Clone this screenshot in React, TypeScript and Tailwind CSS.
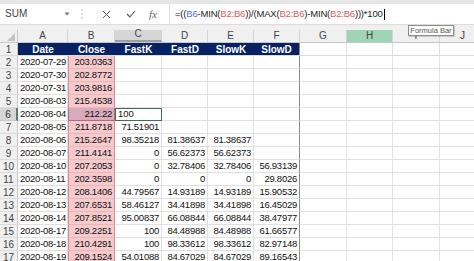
import React from "react";

const colW = ["w-[50px]", "w-[47px]", "w-[47px]", "w-[46px]", "w-[46px]", "w-[46px]", "w-[47px]", "w-[46px]", "w-[47px]", "w-[46px]"];
const letters = ["A", "B", "C", "D", "E", "F", "G", "H", "I", "J"];

type R = [string, string, string?, string?, string?, string?];
const data: R[] = [
  ["2020-07-29", "203.0363"],
  ["2020-07-30", "202.8772"],
  ["2020-07-31", "203.9816"],
  ["2020-08-03", "215.4538"],
  ["2020-08-04", "212.22", "100"],
  ["2020-08-05", "211.8718", "71.51901"],
  ["2020-08-06", "215.2647", "98.35218", "81.38637", "81.38637"],
  ["2020-08-07", "211.4141", "0", "56.62373", "56.62373"],
  ["2020-08-10", "207.2053", "0", "32.78406", "32.78406", "56.93139"],
  ["2020-08-11", "202.3598", "0", "0", "0", "29.8026"],
  ["2020-08-12", "208.1406", "44.79567", "14.93189", "14.93189", "15.90532"],
  ["2020-08-13", "207.6531", "58.46127", "34.41898", "34.41898", "16.45029"],
  ["2020-08-14", "207.8521", "95.00837", "66.08844", "66.08844", "38.47977"],
  ["2020-08-17", "209.2251", "100", "84.48988", "84.48988", "61.66577"],
  ["2020-08-18", "210.4291", "100", "98.33612", "98.33612", "82.97148"],
  ["2020-08-19", "209.1524", "54.01088", "84.67029", "84.67029", "89.16543"],
];

const font = { fontFamily: '"Liberation Sans", Arial, sans-serif' };

function Blue({ children }: { children: React.ReactNode }) {
  return <span className="text-[#4a6fd0]">{children}</span>;
}
function Red({ children }: { children: React.ReactNode }) {
  return <span className="text-[#e0585e]">{children}</span>;
}

const cellText = "text-[9.5px] tracking-[-0.25px] text-[#111] whitespace-nowrap";

export default function App() {
  return (
    <div className="relative w-[474px] h-[261px] overflow-hidden bg-white" style={font}>
      {/* Formula bar area */}
      <div className="h-[4px] bg-[#e6e6e6]" />
      <div className="h-[20px] flex items-center bg-white">
        <div className="w-[76px] h-full flex items-center justify-between pl-[5px] pr-[6px]">
          <span className="text-[10px] text-[#444] leading-none">SUM</span>
          <svg width="6" height="4" viewBox="0 0 6 4"><path d="M0.5 0.5 L3 3.5 L5.5 0.5 Z" fill="#777" /></svg>
        </div>
        <div className="w-[12px] h-full flex items-center justify-center">
          <svg width="2" height="10" viewBox="0 0 2 10">
            <circle cx="1" cy="1" r="0.8" fill="#b5b5b5" />
            <circle cx="1" cy="5" r="0.8" fill="#b5b5b5" />
            <circle cx="1" cy="9" r="0.8" fill="#b5b5b5" />
          </svg>
        </div>
        <div className="w-[82px] h-full flex items-center border-r border-[#e2e2e2]">
          <div className="w-[14px]" />
          <svg width="9" height="9" viewBox="0 0 9 9"><path d="M1 1 L8 8 M8 1 L1 8" stroke="#555" strokeWidth="1" /></svg>
          <div className="w-[15px]" />
          <svg width="10" height="8" viewBox="0 0 10 8"><path d="M1 4 L3.8 7 L9 1" stroke="#555" strokeWidth="1.1" fill="none" /></svg>
          <div className="w-[13px]" />
          <span className="text-[11px] text-[#666] italic leading-none" style={{ fontFamily: '"Liberation Serif", serif' }}>fx</span>
        </div>
        <div className="flex-1 h-full flex items-center pl-[5px] text-[9.5px] tracking-[-0.2px] text-[#222] whitespace-nowrap">
          <span>=((</span><Blue>B6</Blue><span>-MIN(</span><Red>B2:B6</Red><span>))/(MAX(</span><Red>B2:B6</Red><span>)-MIN(</span><Red>B2:B6</Red><span>)))*100</span>
          <span className="inline-block w-px h-[11px] bg-black ml-px" />
        </div>
      </div>
      <div className="h-[6px] bg-[#f0f0f0] border-t border-[#dcdcdc]" />

      {/* Column header row */}
      <div className="flex h-[13px] bg-[#f0f0f0] border-b border-[#c8c8c8]">
        <div className="w-[18px] shrink-0 border-r border-[#c8c8c8] relative">
          <svg className="absolute right-[2px] bottom-[1px]" width="8" height="8" viewBox="0 0 8 8"><path d="M8 0 L8 8 L0 8 Z" fill="#c4c4c4" /></svg>
        </div>
        {letters.map((l, i) => (
          <div
            key={l}
            className={`${colW[i]} shrink-0 flex items-end justify-center pb-px leading-none text-[10px] text-[#444] border-r border-[#d4d4d4] ${
              i === 2 ? "bg-[#d6d6d6] border-b-2 border-b-[#9e9e9e]" : i === 7 ? "bg-[#9fd4b5] text-[#1e5c3a]" : ""
            }`}
          >
            {l}
          </div>
        ))}
      </div>

      {/* Row 1 */}
      <div className="flex h-[13px] border-b border-[#dadada]">
        <div className="w-[18px] shrink-0 bg-[#f0f0f0] border-r border-[#c8c8c8] flex items-center justify-center text-[10px] text-[#444]">1</div>
        {["Date", "Close", "FastK", "FastD", "SlowK", "SlowD"].map((h, i) => (
          <div key={h} className={`${colW[i]} shrink-0 bg-[#062263] text-white font-bold text-[10px] flex items-center justify-center ${i === 5 ? "border-r border-[#8a8a8a]" : ""}`}>
            {h}
          </div>
        ))}
        {[6, 7, 8, 9].map((i) => (
          <div key={i} className={`${colW[i]} shrink-0 border-r border-[#e0e0e0]`} />
        ))}
      </div>

      {/* Data rows */}
      {data.map((row, r) => {
        const rowNum = r + 2;
        const sel = rowNum === 6;
        return (
          <div key={r} className="flex h-[13px]">
            <div
              className={`w-[18px] shrink-0 border-r border-b flex items-center justify-center text-[10px] ${
                sel ? "bg-[#d6d6d6] text-[#333] border-r-2 border-r-[#5a7d68] border-b-[#c8c8c8]" : "bg-[#f0f0f0] text-[#444] border-r-[#c8c8c8] border-b-[#dcdcdc]"
              }`}
            >
              {rowNum}
            </div>
            {/* A */}
            <div className={`${colW[0]} shrink-0 border-r border-b border-[#e0e0e0] pl-[2px] ${cellText} flex items-center overflow-hidden`}>
              {row[0]}
            </div>
            {/* B */}
            <div
              className={`${colW[1]} shrink-0 border-x pr-[2px] ${cellText} flex items-center justify-end ${
                sel ? "bg-[#d9abba] border-[#b46a86] border-b" : "bg-[#f5cacd] border-[#e3868c] border-b border-b-[#f0b5b9]"
              }`}
            >
              {row[1]}
            </div>
            {/* C */}
            {sel ? (
              <div className={`${colW[2]} shrink-0 border border-[#3f6f53] pl-[2px] text-[9.5px] text-[#111] flex items-center`}>{row[2]}</div>
            ) : (
              <div className={`${colW[2]} shrink-0 border-r border-b border-[#e0e0e0] pr-[2px] ${cellText} flex items-center justify-end`}>
                {row[2] ?? ""}
              </div>
            )}
            {[3, 4, 5].map((c) => (
              <div
                key={c}
                className={`${colW[c]} shrink-0 border-b border-[#e0e0e0] pr-[2px] ${cellText} flex items-center justify-end ${
                  c === 5 ? "border-r border-r-[#8a8a8a]" : "border-r"
                }`}
              >
                {row[c] ?? ""}
              </div>
            ))}
            {[6, 7, 8, 9].map((i) => (
              <div key={i} className={`${colW[i]} shrink-0 border-r border-b border-[#e3e3e3]`} />
            ))}
          </div>
        );
      })}

      {/* Tooltip */}
      <div className="absolute left-[408px] top-[25px] w-[46px] h-[11px] bg-white border border-[#8c8c8c] flex items-center justify-center text-[7.5px] text-[#555] whitespace-nowrap shadow-[1px_1px_1px_rgba(0,0,0,0.15)]">
        Formula Bar
      </div>
    </div>
  );
}
